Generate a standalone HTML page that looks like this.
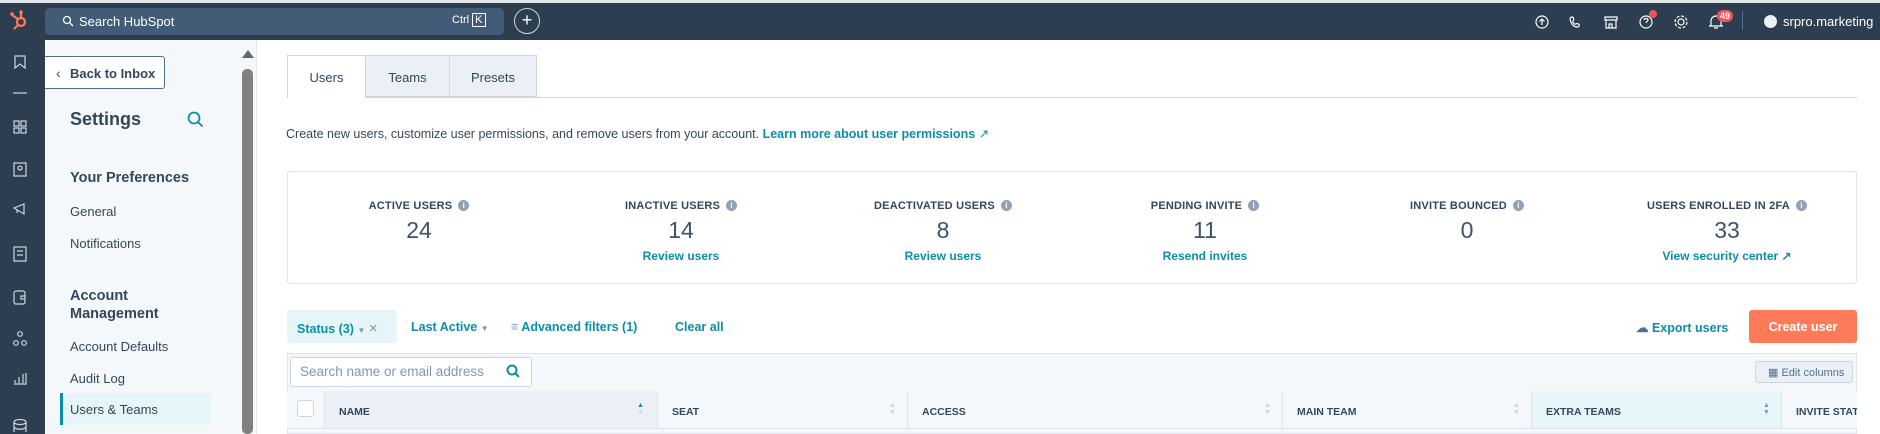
<!DOCTYPE html>
<html><head><meta charset="utf-8"><style>
*{box-sizing:border-box;margin:0;padding:0}
body{width:1880px;height:434px;overflow:hidden;font-family:"Liberation Sans",sans-serif;color:#33475b;background:#fff;position:relative;font-size:13px}
.a{position:absolute}
.top{left:0;top:0;width:1880px;height:40px;background:#2d3e50;border-top:3px solid #e5e8eb}
.nav{left:0;top:40px;width:45px;height:394px;background:#2d3e50}
.side{left:45px;top:40px;width:197px;height:394px;background:#f5f8fa;border-top-left-radius:10px}
.link{color:#0b8ea8;font-weight:bold}
.lbl{font-size:11px;font-weight:bold;letter-spacing:.2px;color:#33475b}
.info{display:inline-block;width:11px;height:11px;border-radius:50%;background:#8fa2b8;color:#fff;font-size:8px;text-align:center;line-height:11px;vertical-align:1px;margin-left:6px}
.stat{position:absolute;top:200px;width:262px;text-align:center}
.stat .n{font-size:23px;color:#3e5368;margin-top:5px;line-height:26px}
.stat .l{font-size:12px;margin-top:6px}
.th{position:absolute;top:391px;height:37px;border-right:1px solid #dfe3eb;font-size:10.5px;font-weight:bold;padding:15px 0 0 14px;color:#33475b}
</style></head><body>
<div class="a top"></div>
<svg class="a" style="left:8px;top:9px" width="22" height="22" viewBox="0 0 22 22"><g stroke="#ff7a59" stroke-width="2.2" fill="none"><circle cx="13" cy="13" r="4"/><path d="M13 9V4M10 10L4 6M10 16l-4 4"/></g><circle cx="13" cy="3" r="1.8" fill="#ff7a59"/><circle cx="4" cy="5" r="1.8" fill="#ff7a59"/></svg>
<div class="a" style="left:45px;top:8px;width:459px;height:27px;background:#425b76;border-radius:5px;color:#fff;font-size:13px;padding:6px 0 0 34px">Search HubSpot</div>
<svg class="a" style="left:62px;top:15px" width="12" height="12"><circle cx="5" cy="5" r="3.5" stroke="#fff" fill="none" stroke-width="1.3"/><path d="M8 8l3 3" stroke="#fff" stroke-width="1.3"/></svg>
<div class="a" style="left:452px;top:14px;color:#fff;font-size:11px">Ctrl <span style="border:1px solid #fff;padding:0 2px">K</span></div>
<div class="a" style="left:514px;top:8px;width:26px;height:26px;border:1px solid #cbd6e2;border-radius:50%;color:#fff;text-align:center;line-height:23px;font-size:18px">+</div>
<svg class="a" style="left:1534px;top:13px" width="200" height="18"><g stroke="#fff" fill="none" stroke-width="1.2">
<circle cx="8" cy="9" r="6"/><path d="M8 12V6M5.5 8.5L8 6l2.5 2.5"/>
<path d="M38 4c2 0 2 3 1 4s2 4 3 3 4 0 3 2-5 1-7-2-3-7 0-7z"/>
<path d="M71 4h12v3h-12zM72 7v8h10V7M75 15v-4h3v4"/>
<circle cx="112" cy="9" r="6"/><path d="M110 7c0-2 4-2 4 0s-2 1-2 3"/>
<circle cx="147" cy="9" r="3"/><circle cx="147" cy="9" r="6" stroke-dasharray="3 1.7"/>
<path d="M177 13V8a5 5 0 0 1 10 0v5h2h-14M180 15h4"/></g></svg>
<div class="a" style="left:1649px;top:10px;width:8px;height:8px;border-radius:50%;background:#f2545b"></div>
<div class="a" style="left:1717px;top:10px;background:#f2545b;color:#fff;font-size:9px;font-weight:bold;border-radius:7px;padding:0 3px;line-height:12px">49</div>
<div class="a" style="left:1742px;top:11px;width:1px;height:19px;background:#516f90"></div>
<div class="a" style="left:1764px;top:15px;width:13px;height:13px;border-radius:50%;background:#eaf0f6"></div>
<div class="a" style="left:1783px;top:14px;color:#fff;font-size:13px">srpro.marketing</div>
<div class="a nav"></div>
<svg class="a" style="left:10px;top:50px" width="20" height="384"><g stroke="#cbd6e2" fill="none" stroke-width="1.2">
<path d="M5 6h10v12l-5-4-5 4z"/><path d="M3 43h14"/>
<rect x="4" y="71" width="5" height="5"/><rect x="11" y="71" width="5" height="5"/><rect x="4" y="78" width="5" height="5"/><rect x="11" y="78" width="5" height="5"/>
<rect x="4" y="113" width="12" height="13"/><circle cx="10" cy="118" r="2"/>
<path d="M4 158l10-4v10zM7 160v3"/>
<rect x="4" y="197" width="12" height="14"/><path d="M7 201h6M7 205h6"/>
<rect x="4" y="241" width="11" height="13" rx="2"/><path d="M15 246h-4v3h4"/>
<circle cx="10" cy="284" r="2.3"/><circle cx="6" cy="293" r="2.3"/><circle cx="14" cy="293" r="2.3"/>
<path d="M5 333v-3M9 333v-6M13 333v-9M16 333v-10M4 334h13"/>
<ellipse cx="10" cy="372" rx="6" ry="2.5"/><path d="M4 372v10M16 372v10M4 377c2 3 10 3 12 0"/></g></svg>
<div class="a side"></div>
<div class="a" style="left:45px;top:56px;width:120px;height:33px;border:1px solid #516f90;border-left:none;background:#fff;border-radius:0 3px 3px 0;font-size:13px;font-weight:bold;padding:9px 0 0 25px">Back to Inbox</div>
<div class="a" style="left:56px;top:65px;color:#33475b;font-size:14px">&#8249;</div>
<div class="a" style="left:70px;top:109px;font-size:18px;font-weight:bold">Settings</div>
<svg class="a" style="left:187px;top:111px" width="17" height="17"><circle cx="7" cy="7" r="5.5" stroke="#0b8ea8" stroke-width="1.8" fill="none"/><path d="M11 11l4.5 4.5" stroke="#0b8ea8" stroke-width="1.8"/></svg>
<div class="a" style="left:70px;top:170px;font-size:14.5px;font-weight:bold">Your Preferences</div>
<div class="a" style="left:70px;top:204px;font-size:13px">General</div>
<div class="a" style="left:70px;top:236px;font-size:13px">Notifications</div>
<div class="a" style="left:70px;top:287px;font-size:14.5px;font-weight:bold;line-height:18px">Account<br>Management</div>
<div class="a" style="left:60px;top:393px;width:151px;height:32px;background:#e5f5f8;border-left:3px solid #0b8ea8"></div>
<div class="a" style="left:70px;top:339px;font-size:13px">Account Defaults</div>
<div class="a" style="left:70px;top:371px;font-size:13px">Audit Log</div>
<div class="a" style="left:70px;top:402px;font-size:13px">Users &amp; Teams</div>
<div class="a" style="left:237px;top:40px;width:20px;height:394px;background:#f5f8fa;border-right:1px solid #e5e8eb"></div>
<div class="a" style="left:242px;top:50px;width:0;height:0;border-left:6px solid transparent;border-right:6px solid transparent;border-bottom:8px solid #666"></div>
<div class="a" style="left:242px;top:69px;width:11px;height:365px;background:#808080;border-radius:5px"></div>
<div class="a" style="left:287px;top:97px;width:1570px;height:1px;background:#cbd6e2"></div>
<div class="a" style="left:287px;top:55px;width:79px;height:43px;background:#fff;border:1px solid #cbd6e2;border-bottom:none;font-size:13px;text-align:center;padding-top:14px">Users</div>
<div class="a" style="left:365px;top:55px;width:85px;height:42px;background:#eaf0f6;border:1px solid #cbd6e2;font-size:13px;text-align:center;padding-top:14px">Teams</div>
<div class="a" style="left:449px;top:55px;width:88px;height:42px;background:#eaf0f6;border:1px solid #cbd6e2;font-size:13px;text-align:center;padding-top:14px">Presets</div>
<div class="a" style="left:286px;top:126px;font-size:12.5px">Create new users, customize user permissions, and remove users from your account. <span class="link">Learn more about user permissions</span> <span style="color:#0b8ea8">&#8599;</span></div>
<div class="a" style="left:287px;top:171px;width:1570px;height:113px;border:1px solid #dfe3eb;border-radius:3px"></div>
<div class="stat" style="left:288px"><div class="lbl">ACTIVE USERS<span class="info">i</span></div><div class="n">24</div></div>
<div class="stat" style="left:550px"><div class="lbl">INACTIVE USERS<span class="info">i</span></div><div class="n">14</div><div class="l link">Review users</div></div>
<div class="stat" style="left:812px"><div class="lbl">DEACTIVATED USERS<span class="info">i</span></div><div class="n">8</div><div class="l link">Review users</div></div>
<div class="stat" style="left:1074px"><div class="lbl">PENDING INVITE<span class="info">i</span></div><div class="n">11</div><div class="l link">Resend invites</div></div>
<div class="stat" style="left:1336px"><div class="lbl">INVITE BOUNCED<span class="info">i</span></div><div class="n">0</div></div>
<div class="stat" style="left:1596px"><div class="lbl">USERS ENROLLED IN 2FA<span class="info">i</span></div><div class="n">33</div><div class="l link">View security center &#8599;</div></div>
<div class="a" style="left:287px;top:310px;width:110px;height:33px;background:#e5f5f8;border-radius:3px"></div>
<div class="a link" style="left:297px;top:320px;font-size:12.5px">Status (3) <span style="font-size:8px;color:#7c98b6">&#9660;</span> <span style="color:#7c98b6;font-weight:normal;font-size:15px">&#215;</span></div>
<div class="a link" style="left:411px;top:320px;font-size:12.5px">Last Active <span style="font-size:8px;color:#7c98b6">&#9660;</span></div>
<div class="a link" style="left:511px;top:320px;font-size:12.5px"><span style="color:#7c98b6;font-weight:normal">&#8801;</span> Advanced filters (1)</div>
<div class="a link" style="left:675px;top:320px;font-size:12.5px">Clear all</div>
<div class="a link" style="left:1636px;top:320px;font-size:12.5px"><span style="color:#516f90">&#9729;</span> Export users</div>
<div class="a" style="left:1749px;top:310px;width:108px;height:33px;background:#ff7a59;border-radius:3px;color:#fff;font-weight:bold;font-size:12.5px;text-align:center;padding-top:10px">Create user</div>
<div class="a" style="left:287px;top:353px;width:1570px;height:81px;background:#f5f8fa;border:1px solid #dfe3eb"></div>
<div class="a" style="left:290px;top:357px;width:242px;height:30px;background:#fff;border:1px solid #cbd6e2;border-radius:3px;color:#7c98b6;font-size:13.5px;padding:6px 0 0 9px">Search name or email address</div>
<svg class="a" style="left:506px;top:364px" width="14" height="15"><circle cx="6" cy="6" r="4.5" stroke="#0b8ea8" stroke-width="2" fill="none"/><path d="M9 9l4 4" stroke="#0b8ea8" stroke-width="2"/></svg>
<div class="a" style="left:1755px;top:361px;width:98px;height:22px;border:1px solid #cbd6e2;border-radius:3px;background:#eaf0f6;color:#516f90;font-size:11px;padding:4px 0 0 12px">&#9638; Edit columns</div>
<div class="a" style="left:287px;top:391px;width:1570px;height:1px;background:#dfe3eb"></div>
<div class="a" style="left:287px;top:428px;width:1570px;height:1px;background:#dfe3eb"></div>
<div class="th" style="left:287px;width:38px;background:#f5f8fa"></div>
<div class="a" style="left:297px;top:400px;width:17px;height:17px;border:1px solid #cbd6e2;border-radius:3px;background:#fff"></div>
<div class="th" style="left:325px;width:333px;background:#eaf0f6">NAME</div>
<div class="th" style="left:658px;width:250px;background:#f5f8fa">SEAT</div>
<div class="th" style="left:908px;width:375px;background:#f5f8fa">ACCESS</div>
<div class="th" style="left:1283px;width:249px;background:#f5f8fa">MAIN TEAM</div>
<div class="th" style="left:1532px;width:250px;background:#e5f5f8">EXTRA TEAMS</div>
<div class="th" style="left:1782px;width:75px;background:#f5f8fa;overflow:hidden;white-space:nowrap;border-right:none">INVITE STATUS</div>
<div class="a" style="left:637px;top:402px;font-size:7px;line-height:7px;color:#cbd6e2"><span style="color:#0b8ea8">&#9650;</span><br>&#9660;</div>
<div class="a" style="left:889px;top:402px;font-size:7px;line-height:7px;color:#cbd6e2">&#9650;<br>&#9660;</div>
<div class="a" style="left:1264px;top:402px;font-size:7px;line-height:7px;color:#cbd6e2">&#9650;<br>&#9660;</div>
<div class="a" style="left:1513px;top:402px;font-size:7px;line-height:7px;color:#cbd6e2">&#9650;<br>&#9660;</div>
<div class="a" style="left:1763px;top:402px;font-size:7px;line-height:7px;color:#7c98b6">&#9650;<br>&#9660;</div>
<div class="a" style="left:1857px;top:40px;width:23px;height:394px;background:#fff"></div>
</body></html>
